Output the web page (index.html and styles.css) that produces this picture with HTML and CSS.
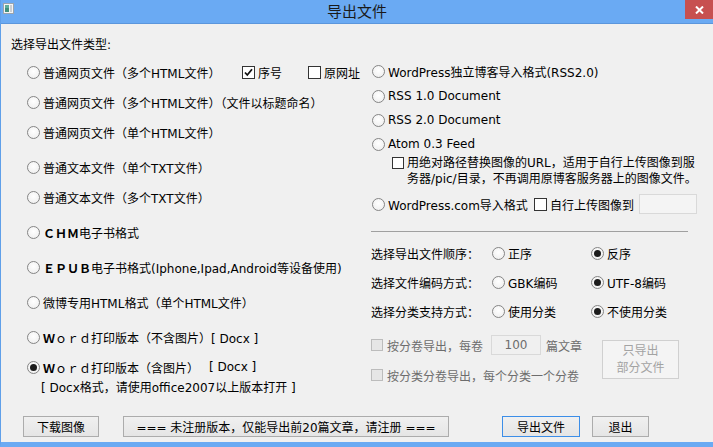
FILE: index.html
```html
<!DOCTYPE html>
<html lang="zh-CN">
<head>
<meta charset="UTF-8">
<title>导出文件</title>
<link rel="stylesheet" href="styles.css">
</head>
<body>
<div class="window">
    <!-- 标题栏 -->
    <div class="titlebar">
        <svg class="app-icon" width="11" height="11" viewBox="0 0 11 11">
            <rect x="0.5" y="0.5" width="10" height="10" fill="#f4f4f4" stroke="#9aa4ad"/>
            <rect x="2" y="2" width="4" height="7" fill="#3f8f7c"/>
            <rect x="2" y="2" width="4" height="3" fill="#5fae9a"/>
            <rect x="7" y="2" width="2" height="7" fill="#c9ced3"/>
        </svg>
        <span class="title">导出文件</span>
        <span class="close">
            <svg width="9" height="8" viewBox="0 0 9 8"><path d="M1 0.5 L8 7.5 M8 0.5 L1 7.5" stroke="#fff" stroke-width="2"/></svg>
        </span>
    </div>

    <div class="main">
        <!-- 左侧：导出文件类型 -->
        <div class="left">
            <div class="caption">选择导出文件类型:</div>
            <div class="opt">
                <span class="radio"></span><span class="first-label">普通网页文件（多个HTML文件）</span>
                <span class="check on"><svg width="11" height="11" viewBox="0 0 11 11"><path d="M2 5.5 L4.3 8 L9 2.3" fill="none" stroke="#111" stroke-width="1.8"/></svg></span>序号
                <span class="check gap"></span>原网址
            </div>
            <div class="opt">
                <span class="radio"></span>普通网页文件（多个HTML文件）（文件以标题命名）
            </div>
            <div class="opt lg">
                <span class="radio"></span>普通网页文件（单个HTML文件）
            </div>
            <div class="opt">
                <span class="radio"></span>普通文本文件（单个TXT文件）
            </div>
            <div class="opt lg">
                <span class="radio"></span>普通文本文件（多个TXT文件）
            </div>
            <div class="opt lg">
                <span class="radio"></span><span class="fw">ＣＨＭ</span>电子书格式
            </div>
            <div class="opt lg">
                <span class="radio"></span><span class="fw">ＥＰＵＢ</span>电子书格式(Iphone,Ipad,Android等设备使用)
            </div>
            <div class="opt lg">
                <span class="radio"></span>微博专用HTML格式（单个HTML文件）
            </div>
            <div class="opt">
                <span class="radio"></span><span class="fw">Ｗ</span>ｏｒｄ打印版本（不含图片）[ Docx ]
            </div>
            <div class="opt last">
                <span class="radio on"></span><span class="fw">Ｗ</span>ｏｒｄ打印版本（含图片）<span class="docx">[ Docx ]</span>
            </div>
            <div class="note">[ Docx格式，请使用office2007以上版本打开 ]</div>
        </div>

        <!-- 右侧：其它格式与选项 -->
        <div class="right">
            <div class="opt-r first"><span class="radio"></span>WordPress独立博客导入格式(RSS2.0)</div>
            <div class="opt-r g9"><span class="radio"></span>RSS 1.0 Document</div>
            <div class="opt-r g8"><span class="radio"></span>RSS 2.0 Document</div>
            <div class="opt-r g8"><span class="radio"></span>Atom 0.3 Feed</div>
            <div class="abs-url">
                <span class="check"></span>
                <span>用绝对路径替换图像的URL，适用于自行上传图像到服<br>务器/pic/目录，不再调用原博客服务器上的图像文件。</span>
            </div>
            <div class="wp-row">
                <span class="radio"></span>WordPress.com导入格式
                <span class="check gap-sm"></span>自行上传图像到
                <span class="edit"></span>
            </div>
            <div class="sep"></div>

            <div class="set-row first">
                <span class="set-label">选择导出文件顺序：</span>
                <span class="set-opt"><span class="radio"></span>正序</span>
                <span class="set-opt"><span class="radio on"></span>反序</span>
            </div>
            <div class="set-row">
                <span class="set-label">选择文件编码方式：</span>
                <span class="set-opt"><span class="radio"></span>GBK编码</span>
                <span class="set-opt"><span class="radio on"></span>UTF-8编码</span>
            </div>
            <div class="set-row">
                <span class="set-label">选择分类支持方式：</span>
                <span class="set-opt"><span class="radio"></span>使用分类</span>
                <span class="set-opt"><span class="radio on"></span>不使用分类</span>
            </div>

            <!-- 分卷（禁用） -->
            <div class="split">
                <div class="split-rows">
                    <div class="vol-row">
                        <span class="check off"></span><span class="vol-label">按分卷导出，每卷</span>
                        <span class="edit num">100</span>篇文章
                    </div>
                    <div class="vol-row second">
                        <span class="check off"></span>按分类分卷导出，每个分类一个分卷
                    </div>
                </div>
                <button class="btn btn-part" disabled>只导出<br>部分文件</button>
            </div>
        </div>
    </div>

    <!-- 底部按钮 -->
    <div class="footer">
        <button class="btn btn-download">下载图像</button>
        <button class="btn btn-notice">=== 未注册版本，仅能导出前20篇文章，请注册 ===</button>
        <button class="btn btn-export">导出文件</button>
        <button class="btn btn-exit">退出</button>
    </div>
</div>
</body>
</html>
```

FILE: styles.css
```css
* {
    box-sizing: border-box;
}

body {
    margin: 0;
    font-family: "DejaVu Sans", "Noto Sans CJK SC", sans-serif;
    font-size: 12px;
    color: #000;
    background: #f0f0f0;
}

.window {
    width: 713px;
    height: 447px;
    border-left: 1px solid #5f9fe9;
    border-bottom: 5px solid #6aaaf3;
    background: #f0f0f0;
}

/* 标题栏 */
.titlebar {
    height: 24px;
    display: grid;
    grid-template-columns: 28px 1fr 28px;
    background: #6aaaf3;
    border-bottom: 1px solid #5b96dc;
}

.app-icon {
    margin: 3px 0 0 2px;
}

.title {
    text-align: center;
    font-family: "Noto Sans CJK SC", sans-serif;
    font-size: 15px;
    line-height: 22px;
    color: #1a1a1a;
}

.close {
    height: 19px;
    background: #c75050;
    display: flex;
    align-items: center;
    justify-content: center;
}

/* 主体 */
.main {
    height: 392px;
    padding-top: 13px;
    display: grid;
    grid-template-columns: 360px 1fr;
}

.left {
    padding-left: 10px;
}

.caption {
    height: 16px;
    line-height: 16px;
    margin-bottom: 11px;
}

.opt {
    display: flex;
    align-items: center;
    height: 16px;
    margin-bottom: 14px;
    padding-left: 16px;
    white-space: nowrap;
}

.opt.lg {
    margin-bottom: 19px;
}

.opt.last {
    margin-bottom: 5px;
}

.first-label {
    width: 199px;
}

.fw {
    font-weight: bold;
}

.docx {
    margin-left: 10px;
}

.note {
    height: 16px;
    line-height: 16px;
    padding-left: 30px;
}

/* 单选框 / 复选框 */
.radio {
    flex: none;
    width: 13px;
    height: 13px;
    margin-right: 3px;
    border: 1px solid #858585;
    border-radius: 50%;
    background: radial-gradient(circle at 50% 40%, #fff, #ececec);
    position: relative;
}

.radio.on::after {
    content: "";
    position: absolute;
    left: 2px;
    top: 2px;
    width: 7px;
    height: 7px;
    border-radius: 50%;
    background: #1c1c1c;
}

.check {
    flex: none;
    width: 13px;
    height: 13px;
    margin-right: 3px;
    border: 1px solid #333;
    background: #fff;
    display: inline-flex;
}

.check.gap {
    margin-left: 26px;
}

.check.gap-sm {
    margin-left: 6px;
}

.check.off {
    border-color: #bcbcbc;
    background: #e6e6e6;
}

/* 右侧 */
.right {
    padding-top: 26px;
    padding-left: 10px;
    white-space: nowrap;
}

.opt-r {
    display: flex;
    align-items: center;
    height: 16px;
    padding-left: 1px;
    margin-top: 10px;
}

.opt-r.first {
    margin-top: 0;
}

.opt-r.g9 {
    margin-top: 9px;
}

.opt-r.g8 {
    margin-top: 8px;
}

.abs-url {
    display: flex;
    align-items: flex-start;
    margin-top: 3px;
    padding-left: 21px;
    line-height: 16px;
}

.abs-url .check {
    margin-top: 2px;
    width: 12px;
    height: 12px;
}

.wp-row {
    display: flex;
    align-items: center;
    width: 326px;
    height: 20px;
    margin-top: 7px;
    padding-left: 1px;
}

.edit {
    flex: none;
    width: 58px;
    height: 20px;
    margin-left: auto;
    border: 1px solid #d9d9d9;
    background: #f4f4f4;
}

.sep {
    width: 317px;
    height: 1px;
    margin-top: 17px;
    background: #a0a0a0;
}

.set-row {
    display: flex;
    align-items: center;
    height: 16px;
    margin-top: 13px;
}

.set-label {
    width: 121px;
}

.set-opt {
    width: 99px;
    display: flex;
    align-items: center;
}

/* 分卷（禁用状态） */
.split {
    display: flex;
    margin-top: 16px;
}

.split-rows {
    width: 231px;
    color: #6d6d6d;
}

.vol-row {
    display: flex;
    align-items: center;
    height: 20px;
}

.vol-row.second {
    height: 16px;
    margin-top: 12px;
}

.vol-row .check {
    width: 12px;
    height: 12px;
    margin-right: 4px;
}

.vol-label {
    width: 104px;
}

.edit.num {
    width: 50px;
    margin: 0 5px 0 0;
    background: #f0f0f0;
    text-align: center;
    line-height: 18px;
    color: #6d6d6d;
}

/* 按钮 */
.btn {
    height: 21px;
    padding: 0;
    border: 1px solid #acacac;
    background: linear-gradient(#f0f0f0, #e5e5e5);
    font-family: "DejaVu Sans", "Noto Sans CJK SC", sans-serif;
    font-size: 12px;
    color: #000;
}

.btn-part {
    width: 77px;
    height: 39px;
    margin-top: 5px;
    border-color: #d0d0d0;
    background: #f4f4f4;
    color: #a3a3a3;
    line-height: 17px;
}

.footer {
    height: 26px;
    display: flex;
    align-items: flex-start;
    padding-left: 22px;
}

.btn-download {
    width: 76px;
}

.btn-notice {
    width: 326px;
    margin-left: 24px;
}

.btn-export {
    width: 78px;
    margin-left: 53px;
    border-color: #3c8ee8;
}

.btn-exit {
    width: 57px;
    margin-left: 12px;
}
```
